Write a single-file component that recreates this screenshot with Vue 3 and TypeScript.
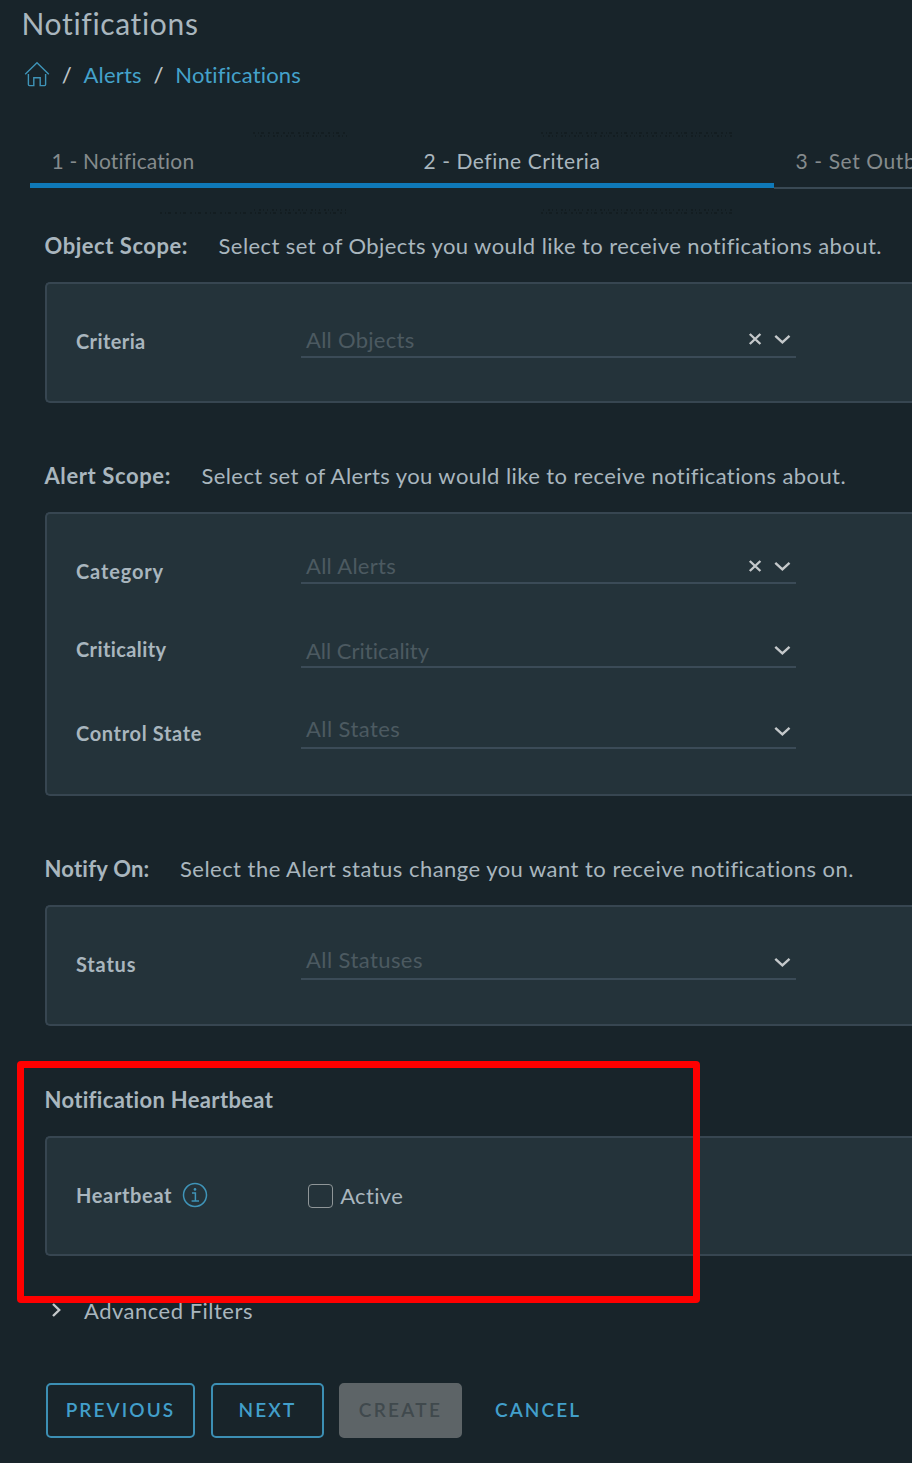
<script setup lang="ts">
interface Field {
  key: string
  label: string
  placeholder: string
  clearable?: boolean
}

interface Scope {
  key: string
  title: string
  hint: string
  fields: Field[]
}

const tabs = [
  { key: 'notification', label: '1 - Notification', done: true, active: false },
  { key: 'criteria', label: '2 - Define Criteria', done: true, active: true },
  { key: 'outbound', label: '3 - Set Outbound Method', done: false, active: false },
]

const scopes: Scope[] = [
  {
    key: 'object',
    title: 'Object Scope:',
    hint: 'Select set of Objects you would like to receive notifications about.',
    fields: [{ key: 'criteria', label: 'Criteria', placeholder: 'All Objects', clearable: true }],
  },
  {
    key: 'alert',
    title: 'Alert Scope:',
    hint: 'Select set of Alerts you would like to receive notifications about.',
    fields: [
      { key: 'category', label: 'Category', placeholder: 'All Alerts', clearable: true },
      { key: 'criticality', label: 'Criticality', placeholder: 'All Criticality' },
      { key: 'control', label: 'Control State', placeholder: 'All States' },
    ],
  },
  {
    key: 'notify',
    title: 'Notify On:',
    hint: 'Select the Alert status change you want to receive notifications on.',
    fields: [{ key: 'status', label: 'Status', placeholder: 'All Statuses' }],
  },
]
</script>

<template>
  <main class="page">
    <h1 class="title">Notifications</h1>

    <nav class="crumbs">
      <svg class="home" width="26" height="26" viewBox="0 0 26 26">
        <path d="M1.2 13.2 13 1.7 24.8 13.2M4.4 13V23.6Q4.4 24.6 5.4 24.6H9.8V16.8H16.2V24.6H20.6Q21.6 24.6 21.6 23.6V13" />
      </svg>
      <span class="slash">/</span>
      <a class="crumb crumb-alerts">Alerts</a>
      <span class="slash">/</span>
      <a class="crumb">Notifications</a>
    </nav>

    <div class="tabs">
      <div
        v-for="tab in tabs"
        :key="tab.key"
        class="tab"
        :class="['tab-' + tab.key, { done: tab.done, active: tab.active }]"
      >{{ tab.label }}</div>
    </div>

    <section v-for="scope in scopes" :key="scope.key" class="scope" :class="'scope-' + scope.key">
      <header class="scope-head">
        <h2>{{ scope.title }}</h2>
        <p>{{ scope.hint }}</p>
      </header>
      <div class="panel">
        <div v-for="field in scope.fields" :key="field.key" class="row" :class="'row-' + field.key">
          <label class="label">{{ field.label }}</label>
          <div class="select">
            <span class="placeholder">{{ field.placeholder }}</span>
            <svg v-if="field.clearable" class="icon clear" width="24" height="24" viewBox="0 0 24 24">
              <path d="M6.8 7 17.4 17M17.4 7 6.8 17" />
            </svg>
            <svg class="icon" width="24" height="24" viewBox="0 0 24 24">
              <path d="M5.3 8.8 12.4 15.4 19.5 8.8" />
            </svg>
          </div>
        </div>
      </div>
    </section>

    <section class="scope scope-heartbeat">
      <header class="scope-head"><h2>Notification Heartbeat</h2></header>
      <div class="panel">
        <div class="beat">
          <label class="label">Heartbeat</label>
          <svg class="info" width="26" height="26" viewBox="0 0 26 26">
            <circle cx="13" cy="13" r="11.5" />
            <path d="M10 11H13.4V18.8M9.6 19H17" />
            <circle class="dot" cx="13" cy="7.4" r="1.3" />
          </svg>
          <span class="box"></span>
          <span class="active-text">Active</span>
        </div>
      </div>
      <div class="callout"></div>
    </section>

    <div class="advanced">
      <svg width="12" height="16" viewBox="0 0 12 16"><path d="M3 2 9.2 8 3 14" /></svg>
      <span>Advanced Filters</span>
    </div>

    <footer class="actions">
      <button class="btn previous">PREVIOUS</button>
      <button class="btn next">NEXT</button>
      <button class="btn create" disabled>CREATE</button>
      <button class="btn cancel">CANCEL</button>
    </footer>

    <svg class="specks" width="912" height="100" viewBox="0 0 912 100">
      <path d="M253 13H347M541 13H732M160 93H347M541 93H732" />
      <path class="offset" d="M255 16H347M543 16H732M254 90H347M543 90H732" />
    </svg>
  </main>
</template>

<style>
html,
body {
  background: #18242a;
  overflow: hidden;
}
</style>

<style scoped>
.page {
  position: relative;
  box-sizing: border-box;
  width: 912px;
  height: 1463px;
  overflow: hidden;
  background: #18242a;
  color: #a9b6be;
  font-family: Lato, "Liberation Sans", sans-serif;
  font-size: 22px;
  font-variant-ligatures: none;
}
.title {
  height: 50px;
  margin: 0 0 0 21.5px;
  font-size: 30px;
  line-height: 47px;
  font-weight: 400;
  letter-spacing: 0.65px;
}
.crumbs {
  display: flex;
  align-items: center;
  height: 49px;
  padding: 0 0 2px 24px;
}
.home {
  fill: none;
  stroke: #3f94b8;
  stroke-width: 1.4;
  margin-top: -1px;
}
.slash {
  width: 33.5px;
  text-align: center;
  color: #bcc3c6;
  font-weight: 500;
}
.crumb {
  color: #44a2cb;
  letter-spacing: 0.15px;
}
.crumb-alerts {
  letter-spacing: 0.2px;
}
.tabs {
  display: flex;
  height: 50px;
  margin: 38px 0 0 29.5px;
  width: 1116px;
}
.tab {
  box-sizing: border-box;
  width: 372px;
  padding-left: 22px;
  line-height: 43px;
  font-size: 21px;
  white-space: nowrap;
  color: #858b8d;
  border-bottom: 2px solid #394954;
  letter-spacing: 0.2px;
}
.tab.done {
  height: 49px;
  border-bottom: 5px solid #0f79b8;
}
.tab-criteria {
  letter-spacing: 0.55px;
}
.tab-outbound {
  letter-spacing: 0.6px;
}
.tab.active {
  color: #a9b6be;
}
.scope {
  position: relative;
  margin: 0 0 58px 44.5px;
}
.tabs + .scope {
  margin-top: 42px;
}
.scope-notify {
  margin-bottom: 59px;
}
.scope-heartbeat {
  margin-bottom: 0;
}
.scope-head {
  display: flex;
  gap: 30.5px;
  height: 30px;
  margin-bottom: 21px;
  line-height: 30px;
  white-space: nowrap;
}
.scope-head h2 {
  margin: 0;
  font-size: 22px;
  font-weight: 700;
  letter-spacing: 0.54px;
}
.scope-head p {
  margin: 0;
  letter-spacing: 0.42px;
}
.scope-alert h2 {
  letter-spacing: 0.6px;
}
.scope-notify h2 {
  letter-spacing: 0.22px;
}
.scope-heartbeat h2 {
  letter-spacing: 0.33px;
}
.scope-notify p {
  letter-spacing: 0.47px;
}
.panel {
  box-sizing: border-box;
  height: 121px;
  border: 2px solid #374651;
  border-right: 0;
  border-radius: 5px 0 0 5px;
  background: #24333a;
  overflow: hidden;
}
.scope-alert .panel {
  height: 284px;
}
.scope-heartbeat .panel {
  height: 120px;
}
.row {
  display: flex;
  align-items: flex-end;
  height: 44px;
  margin-top: 30px;
}
.row-category {
  margin-top: 26px;
}
.row-criticality {
  margin-top: 40px;
}
.row-control {
  margin-top: 37px;
}
.row-status {
  margin-top: 29px;
}
.label {
  width: 225px;
  padding-left: 29.5px;
  box-sizing: border-box;
  font-size: 20px;
  line-height: 24px;
  font-weight: 700;
  letter-spacing: 0.4px;
}
.row .label {
  padding-bottom: 5px;
  width: 254.5px;
}
.row-category .label {
  padding-bottom: 1px;
  letter-spacing: 0.85px;
}
.row-criticality .label {
  padding-bottom: 7px;
}
.row-control .label {
  padding-bottom: 4px;
  letter-spacing: 0.65px;
}
.row-status .label {
  padding-bottom: 4px;
  letter-spacing: 0.8px;
}
.select {
  box-sizing: border-box;
  display: flex;
  align-items: flex-end;
  width: 495px;
  height: 44px;
  padding: 0 2px 0 5px;
  border-bottom: 2px solid #3b4b57;
}
.placeholder {
  flex: 1;
  line-height: 24px;
  padding-bottom: 4px;
  color: #4c5a61;
  letter-spacing: 0.28px;
}
.row-criticality .placeholder {
  padding-bottom: 3px;
  letter-spacing: 0;
}
.row-control .placeholder,
.row-status .placeholder {
  padding-bottom: 6px;
  letter-spacing: 0.42px;
}
.icon {
  margin-bottom: 4.5px;
  fill: none;
  stroke: #c4c8ca;
  stroke-width: 2.4;
}
.row-criteria .icon {
  margin-bottom: 5px;
}
.clear {
  margin-right: 3px;
}
.beat {
  display: flex;
  align-items: center;
  height: 114px;
}
.beat .label {
  width: auto;
  letter-spacing: 0.65px;
}
.info {
  margin: -1px 0 0 9.5px;
  fill: none;
  stroke: #3f94b8;
  stroke-width: 1.5;
}
.info .dot {
  fill: #3f94b8;
  stroke: none;
}
.box {
  box-sizing: border-box;
  width: 25px;
  height: 24px;
  margin: 2px 7.5px 0 100px;
  border: 1.5px solid #8f9698;
  border-radius: 4px;
}
.active-text {
  letter-spacing: 0.35px;
}
.callout {
  position: absolute;
  box-sizing: border-box;
  left: -27.5px;
  top: -24px;
  width: 683px;
  height: 242px;
  border: 7px solid #f00;
  border-radius: 4px;
}
.advanced {
  display: flex;
  align-items: center;
  height: 30px;
  margin: 39px 0 0 50px;
  letter-spacing: 0.5px;
}
.advanced svg {
  width: 12px;
  margin-right: 22px;
  margin-top: -1px;
  fill: none;
  stroke: #c4c8ca;
  stroke-width: 2.4;
}
.actions {
  display: flex;
  margin: 58px 0 0 46px;
}
.btn {
  box-sizing: border-box;
  height: 55px;
  padding: 0 0 2px;
  background: none;
  border: 2px solid #3c8fb4;
  border-radius: 5px;
  color: #429fca;
  font: 600 19px Lato, "Liberation Sans", sans-serif;
  letter-spacing: 2.1px;
}
.previous {
  width: 149px;
  margin-right: 16px;
}
.next {
  width: 113px;
  margin-right: 15px;
}
.create {
  width: 123px;
  background: #5d6467;
  border-color: #5d6467;
  color: #40494d;
  letter-spacing: 2.3px;
}
.cancel {
  border-color: transparent;
  margin-left: 31px;
}
.specks {
  position: absolute;
  left: 0;
  top: 120px;
  fill: none;
  stroke: #121b1f;
  stroke-width: 1.3;
  stroke-dasharray: 2 3 1 2 3 4;
}
.specks .offset {
  stroke-dasharray: 1 4 2 2 1 3;
}
</style>
